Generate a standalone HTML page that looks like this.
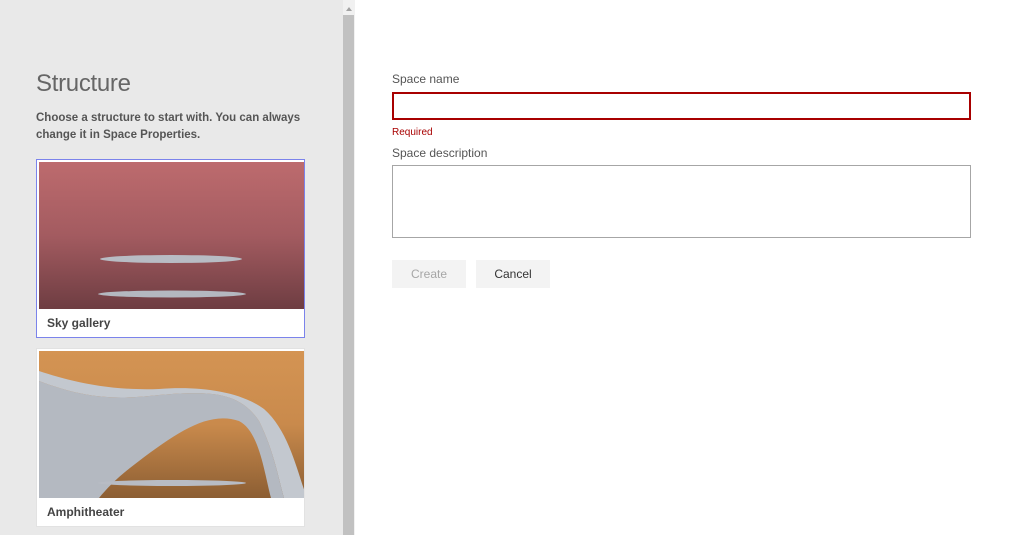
<!DOCTYPE html>
<html><head><style>
*{margin:0;padding:0;box-sizing:border-box}
body{width:1024px;height:535px;overflow:hidden;background:#fff;font-family:"Liberation Sans",sans-serif;position:relative}
.left{position:absolute;left:0;top:0;width:343px;height:535px;background:#e9e9e9}
.sb{position:absolute;left:343px;top:0;width:12px;height:535px;background:#f1f1f1}
.thumb{position:absolute;left:343px;top:15px;width:11px;height:520px;background:#c1c1c1}
.arr{position:absolute;left:346px;top:7px;width:0;height:0;border-left:3px solid transparent;border-right:3px solid transparent;border-bottom:4px solid #a3a3a3}
h1{position:absolute;left:36px;top:70px;font-size:24px;font-weight:normal;color:#666;letter-spacing:-0.3px}
.desc{position:absolute;left:36px;top:110px;width:285px;font-size:11.5px;font-weight:bold;color:#555;line-height:17px}
.card{position:absolute;left:36px;width:269px;height:179px;background:#fff;border:1px solid #e2e2e2;padding:2px}
.card.sel{border-color:#7b83eb}
.img{width:265px;height:147px;position:relative;overflow:hidden}
.lbl{position:absolute;left:10px;bottom:7px;font-size:12px;font-weight:bold;color:#444}
.fl{position:absolute;font-size:12px;color:#555}
.in{position:absolute;left:392px;width:579px;background:#fff}
.btn{position:absolute;top:260px;width:74px;height:28px;background:#f3f3f3;font-size:12px;text-align:center;line-height:28px}
</style></head><body>
<div class="left"></div>
<div class="sb"></div><div class="thumb"></div><div class="arr"></div>
<h1>Structure</h1>
<div class="desc">Choose a structure to start with. You can always change it in Space Properties.</div>
<div class="card sel" style="top:159px"><div class="img" style="background:linear-gradient(#bd6b6e,#a35b60 50%,#6e3d42)">
<svg width="265" height="147" style="position:absolute;left:0;top:0"><ellipse cx="132" cy="97" rx="71" ry="4" fill="#b8bcc4"/><ellipse cx="133" cy="132" rx="74" ry="3.5" fill="#b4b8c0"/></svg></div><div class="lbl">Sky gallery</div></div>
<div class="card" style="top:348px"><div class="img" style="background:linear-gradient(#d49453,#c98a4c 50%,#8c5e33)">
<svg width="265" height="147" style="position:absolute;left:0;top:0"><path d="M0 30 C40 45 70 50 120 44 C170 40 200 40 220 70 C235 100 240 130 245 147 L268 147 C258 120 250 80 225 58 C200 40 160 35 120 38 C70 40 30 30 0 20 Z" fill="#c3c8cf"/><path d="M0 30 C40 45 70 50 120 44 C170 40 200 40 220 70 C235 100 240 130 245 147 L268 147 L268 147 L232 147 C225 120 220 80 200 70 C170 60 140 80 100 110 C80 125 70 135 60 147 L0 147 Z" fill="#b4b9c1"/><ellipse cx="133" cy="132" rx="74" ry="3" fill="#b8bcc4"/></svg></div><div class="lbl">Amphitheater</div></div>
<div class="fl" style="left:392px;top:72px">Space name</div>
<div class="in" style="top:92px;height:28px;border:2px solid #a80000"></div>
<div class="fl" style="left:392px;top:127px;font-size:10px;color:#a80000">Required</div>
<div class="fl" style="left:392px;top:146px">Space description</div>
<div class="in" style="top:165px;height:73px;border:1px solid #a6a6a6"></div>
<div class="btn" style="left:392px;color:#a6a6a6">Create</div>
<div class="btn" style="left:476px;color:#333">Cancel</div>
</body></html>
